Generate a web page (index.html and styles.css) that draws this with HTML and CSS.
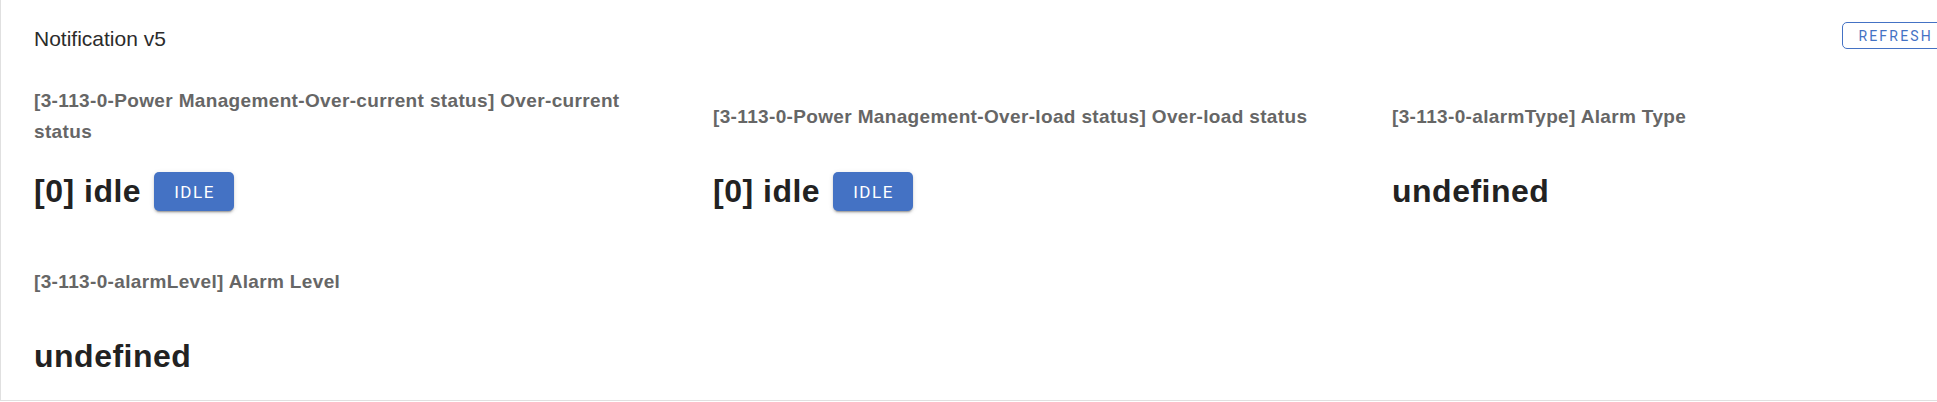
FILE: index.html
```html
<!DOCTYPE html>
<html lang="en">
<head>
    <meta charset="UTF-8">
    <title>Notification v5</title>
    <link rel="stylesheet" href="styles.css">
</head>
<body>
<div class="card">
    <header class="card-header">
        <div class="card-title">Notification v5</div>
        <button class="btn-outlined">Refresh</button>
    </header>

    <div class="value-grid">
        <div class="value-item">
            <div class="value-label">[3-113-0-Power Management-Over-current status] Over-current status</div>
            <div class="value-reading">
                <span>[0] idle</span>
                <button class="btn-state">Idle</button>
            </div>
        </div>

        <div class="value-item">
            <div class="value-label">[3-113-0-Power Management-Over-load status] Over-load status</div>
            <div class="value-reading">
                <span>[0] idle</span>
                <button class="btn-state">Idle</button>
            </div>
        </div>

        <div class="value-item">
            <div class="value-label">[3-113-0-alarmType] Alarm Type</div>
            <div class="value-reading">
                <span>undefined</span>
            </div>
        </div>

        <div class="value-item">
            <div class="value-label">[3-113-0-alarmLevel] Alarm Level</div>
            <div class="value-reading">
                <span>undefined</span>
            </div>
        </div>
    </div>
</div>
</body>
</html>
```

FILE: styles.css
```css
body {
    margin: 0;
    overflow: hidden;
    font-family: "Liberation Sans", Arial, sans-serif;
    background: white;
}

/* Card */
.card {
    width: 1980px;
    padding: 22px 32px 24px 33px;
    border-left: 1px solid #e0e0e0;
    border-bottom: 1px solid #e0e0e0;
    box-sizing: border-box;
    background: white;
}

.card-header {
    display: flex;
    align-items: flex-start;
    justify-content: space-between;
}

.card-title {
    margin-top: 5px;
    font-size: 21px;
    color: #2b2b2b;
}

.btn-outlined {
    height: 27px;
    padding: 0 14px 0 15px;
    border: 1px solid #4472c4;
    border-radius: 5px;
    background: white;
    color: #4472c4;
    font-family: Roboto, sans-serif;
    font-size: 14px;
    letter-spacing: 2.2px;
    text-transform: uppercase;
    cursor: pointer;
}

/* Values */
.value-grid {
    display: grid;
    grid-template-columns: 679px 679px 1fr;
    row-gap: 39px;
    margin-top: 34px;
}

.value-label {
    display: flex;
    align-items: center;
    width: 615px;
    min-height: 62px;
    font-size: 19px;
    line-height: 31px;
    letter-spacing: 0.35px;
    font-weight: bold;
    color: #666;
}

.value-reading {
    display: flex;
    align-items: center;
    gap: 13px;
    min-height: 39px;
    margin-top: 25px;
    font-size: 32px;
    letter-spacing: 0.5px;
    font-weight: bold;
    color: #222;
}

.btn-state {
    height: 39px;
    padding: 0 19px 0 20px;
    border: none;
    border-radius: 5px;
    background: #4472c4;
    color: white;
    font-family: Roboto, sans-serif;
    font-size: 17px;
    letter-spacing: 0.09em;
    text-transform: uppercase;
    box-shadow: 0 3px 1px -2px rgba(0, 0, 0, 0.2), 0 2px 2px 0 rgba(0, 0, 0, 0.14), 0 1px 5px 0 rgba(0, 0, 0, 0.12);
    cursor: pointer;
}
```
